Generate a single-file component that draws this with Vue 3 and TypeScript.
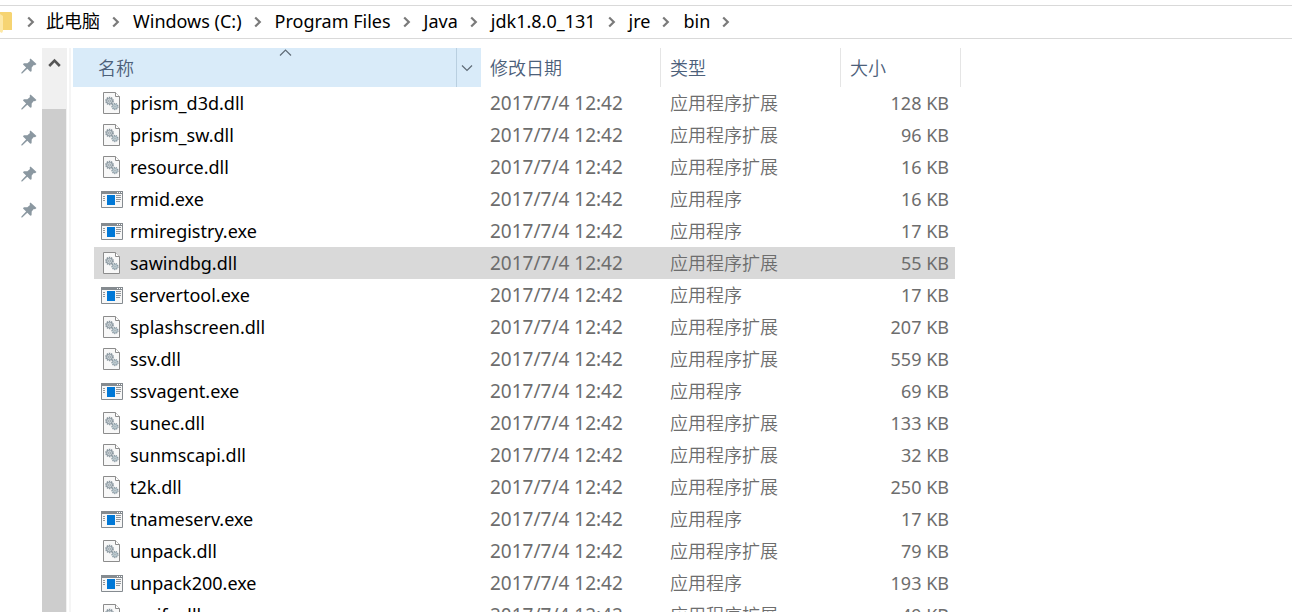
<script setup lang="ts">
type Kind = 'dll' | 'exe'
interface Entry {
  name: string
  kind: Kind
  size: string
}

const crumbs: string[] = ['此电脑', 'Windows (C:)', 'Program Files', 'Java', 'jdk1.8.0_131', 'jre', 'bin']
const modified = '2017/7/4 12:42'
const selected = 'sawindbg.dll'
const kindLabel: Record<Kind, string> = { dll: '应用程序扩展', exe: '应用程序' }

const entries: Entry[] = [
  { name: 'prism_d3d.dll', kind: 'dll', size: '128 KB' },
  { name: 'prism_sw.dll', kind: 'dll', size: '96 KB' },
  { name: 'resource.dll', kind: 'dll', size: '16 KB' },
  { name: 'rmid.exe', kind: 'exe', size: '16 KB' },
  { name: 'rmiregistry.exe', kind: 'exe', size: '17 KB' },
  { name: 'sawindbg.dll', kind: 'dll', size: '55 KB' },
  { name: 'servertool.exe', kind: 'exe', size: '17 KB' },
  { name: 'splashscreen.dll', kind: 'dll', size: '207 KB' },
  { name: 'ssv.dll', kind: 'dll', size: '559 KB' },
  { name: 'ssvagent.exe', kind: 'exe', size: '69 KB' },
  { name: 'sunec.dll', kind: 'dll', size: '133 KB' },
  { name: 'sunmscapi.dll', kind: 'dll', size: '32 KB' },
  { name: 't2k.dll', kind: 'dll', size: '250 KB' },
  { name: 'tnameserv.exe', kind: 'exe', size: '17 KB' },
  { name: 'unpack.dll', kind: 'dll', size: '79 KB' },
  { name: 'unpack200.exe', kind: 'exe', size: '193 KB' },
  { name: 'verify.dll', kind: 'dll', size: '49 KB' },
]
</script>

<template>
  <div class="explorer">
    <nav class="address" aria-label="路径">
      <svg class="folder" width="12" height="22" viewBox="0 0 12 22" aria-hidden="true">
        <path d="M0 1h11l1 1v17H0z" fill="#f6d472" />
        <path d="M0 3l3 2v15l-1 2-2-1z" fill="#fde8a6" />
      </svg>
      <ol class="crumbs">
        <li class="crumb lead">
          <svg class="sep" width="8" height="12" viewBox="0 0 8 12" aria-hidden="true"><path d="M1.2 1.5L5.8 6 1.2 10.5" /></svg>
        </li>
        <li v-for="crumb in crumbs" :key="crumb" class="crumb">
          <a href="#">{{ crumb }}</a>
          <svg class="sep" width="8" height="12" viewBox="0 0 8 12" aria-hidden="true"><path d="M1.2 1.5L5.8 6 1.2 10.5" /></svg>
        </li>
      </ol>
    </nav>

    <div class="body">
      <aside class="pins">
        <svg v-for="n in 5" :key="n" width="16" height="16" viewBox="0 0 16 16" aria-hidden="true">
          <path d="M9.5 0.5L15.5 6 14 7.2 12.8 6.9 10.7 9.6 10.6 13.2 9.3 13.8 6.3 10.8 1.2 15.6 0.3 15.6 0.4 14.6 5.1 9.5 2 6.5 2.8 5.2 6.4 5.3 9 3.1 8.6 1.8z" />
        </svg>
      </aside>
      <div class="scrollbar">
        <button class="scroll-up" type="button" aria-label="向上滚动">
          <svg width="13" height="10" viewBox="0 0 13 10" aria-hidden="true"><path d="M1.2 8L6.5 2.5 11.8 8" /></svg>
        </button>
        <div class="thumb"></div>
      </div>
      <div class="divider"></div>

      <main class="files">
        <table>
          <colgroup>
            <col class="c-name" />
            <col class="c-col" />
            <col class="c-col" />
            <col class="c-size" />
          </colgroup>
          <thead>
            <tr>
              <th class="sorted" scope="col">
                <div class="name-head">
                  <span>名称</span>
                  <svg class="sort" width="13" height="8" viewBox="0 0 13 8" aria-hidden="true"><path d="M1 6.5L6.5 1 12 6.5" /></svg>
                  <button class="filter" type="button" aria-label="筛选">
                    <svg width="12" height="8" viewBox="0 0 12 8" aria-hidden="true"><path d="M1 1.5L6 6.5 11 1.5" /></svg>
                  </button>
                </div>
              </th>
              <th scope="col">修改日期</th>
              <th scope="col">类型</th>
              <th scope="col">大小</th>
            </tr>
          </thead>
          <tbody>
            <tr v-for="entry in entries" :key="entry.name" :class="{ selected: entry.name === selected }">
              <td class="name">
                <div class="file">
                  <span class="icon">
                    <svg v-if="entry.kind === 'dll'" class="dll" width="17" height="22" viewBox="0 0 17 22" aria-hidden="true">
                      <path d="M.5.5h12l4 4v17H.5z" fill="#f8f8f8" stroke="#8c8c8c" />
                      <path d="M12.5.5v4h4" fill="#fff" stroke="#8c8c8c" />
                      <circle cx="6.5" cy="9" r="3.5" fill="#d3dade" stroke="#87949c" stroke-width="1.6" stroke-dasharray="1.4 .8" />
                      <circle cx="6.5" cy="9" r="2.7" fill="none" stroke="#87949c" stroke-width=".7" />
                      <circle cx="6.5" cy="9" r="1" fill="#fff" stroke="#7b8991" stroke-width=".8" />
                      <circle cx="12" cy="14.5" r="2.9" fill="#dce8ed" stroke="#87949c" stroke-width="1.5" stroke-dasharray="1.2 .8" />
                      <circle cx="12" cy="14.5" r="2.1" fill="none" stroke="#91a4ae" stroke-width=".7" />
                      <circle cx="12" cy="14.5" r=".8" fill="#fff" stroke="#7b8991" stroke-width=".7" />
                    </svg>
                    <svg v-else width="22" height="17" viewBox="0 0 22 17" aria-hidden="true">
                      <path d="M.5.5h21v16H.5z" fill="#f7f7f7" stroke="#858b90" />
                      <path d="M0 0h22v3H0z" fill="#858b90" />
                      <path d="M16 1h1v1h-1zM18 1h1v1h-1zM20 1h1v1h-1z" fill="#fff" />
                      <path d="M6 4h8v10H6z" fill="#0078d7" />
                      <path d="M2 5.5h2M2 7.5h2M2 9.5h2M15 4.5h5M15 6.5h5M15 8.5h5M15 10.5h4" stroke="#92979b" fill="none" />
                    </svg>
                  </span>
                  <span>{{ entry.name }}</span>
                </div>
              </td>
              <td class="date">{{ modified }}</td>
              <td class="kind">{{ kindLabel[entry.kind] }}</td>
              <td class="size"><div>{{ entry.size }}</div></td>
            </tr>
          </tbody>
        </table>
      </main>
    </div>
  </div>
</template>

<style>
body {
  margin: 0;
  overflow: hidden;
}
</style>

<style scoped>
.explorer {
  display: flex;
  flex-direction: column;
  height: 100vh;
  box-sizing: border-box;
  padding-top: 5px;
  overflow: hidden;
  background: #fff;
  color: #000;
  font-family: "Noto Sans", "Noto Sans CJK SC", sans-serif;
  font-size: 18px;
  line-height: 32px;
}

.address {
  display: flex;
  align-items: center;
  flex: none;
  height: 32px;
  border-top: 1px solid #d9d9d9;
  border-bottom: 1px solid #d9d9d9;
}

.folder {
  flex: none;
}

.crumbs {
  display: flex;
  margin: 0;
  padding: 0;
  list-style: none;
}

.crumb {
  display: flex;
  align-items: center;
  gap: 12px;
  padding-right: 13px;
  white-space: nowrap;
}

.crumb.lead {
  padding: 0 11px 0 15px;
}

.crumb a {
  padding-bottom: 2px;
  color: #000;
  text-decoration: none;
}

.sep path {
  fill: none;
  stroke: #7a7a7a;
  stroke-width: 2.2;
}

.body {
  display: flex;
  flex: 1;
  min-height: 0;
  margin-top: 9px;
}

.pins {
  display: flex;
  flex-direction: column;
  align-items: flex-end;
  gap: 20px;
  flex: none;
  width: 37px;
  padding: 10px 5px 0 0;
}

.pins svg {
  flex: none;
  fill: #8b98a1;
}

.scrollbar {
  display: flex;
  flex-direction: column;
  flex: none;
  width: 25px;
  background: #f0f0f0;
}

.scroll-up {
  display: flex;
  justify-content: center;
  flex: none;
  height: 61px;
  padding: 10px 0 0;
  border: 0;
  background: none;
}

.scroll-up path {
  fill: none;
  stroke: #555;
  stroke-width: 2.6;
}

.thumb {
  flex: 1;
  margin-right: 1px;
  background: #cdcdcd;
}

.divider {
  flex: none;
  width: 2px;
  margin: 0 2px;
  background: #f5f5f5;
}

.files {
  flex: 1;
  min-width: 0;
  overflow: hidden;
}

table {
  width: 888px;
  table-layout: fixed;
  border-collapse: separate;
  border-spacing: 0;
}

.c-name {
  width: 408px;
}

.c-col {
  width: 180px;
}

.c-size {
  width: 120px;
}

th {
  height: 39px;
  padding: 0 0 0 9px;
  border-right: 1px solid #e5e5e5;
  color: #4c607a;
  font-weight: 350;
  text-align: left;
}

th.sorted {
  padding: 0;
  border-right: 0;
  background: #d9ebf9;
}

.name-head {
  position: relative;
  display: flex;
  align-items: center;
  justify-content: space-between;
  height: 39px;
  padding-left: 25px;
}

.sort {
  position: absolute;
  top: 1px;
  left: 206px;
}

.sort path,
.filter path {
  fill: none;
  stroke: #5f6b76;
  stroke-width: 1.2;
}

.filter {
  display: flex;
  align-items: center;
  justify-content: center;
  width: 25px;
  height: 39px;
  padding: 0 4px 0 0;
  border: 0;
  border-left: 1px solid #b9cfe0;
  background: none;
}

td {
  height: 32px;
  padding: 0 0 0 9px;
  color: #6d6d6d;
  white-space: nowrap;
}

td.name {
  padding: 0 0 0 21px;
  color: #000;
}

.date {
  font-size: 19px;
}

.kind {
  font-weight: 350;
}

.file {
  display: flex;
  align-items: center;
}

.icon {
  display: flex;
  width: 22px;
  margin: 0 7px;
}

.dll {
  margin-left: 2px;
}

td.size {
  padding: 0 6px 0 0;
  text-align: right;
}

.size div {
  padding-right: 6px;
}

.selected td {
  background: #d9d9d9;
}

.selected .name,
.selected .size {
  background-clip: content-box;
}
</style>
